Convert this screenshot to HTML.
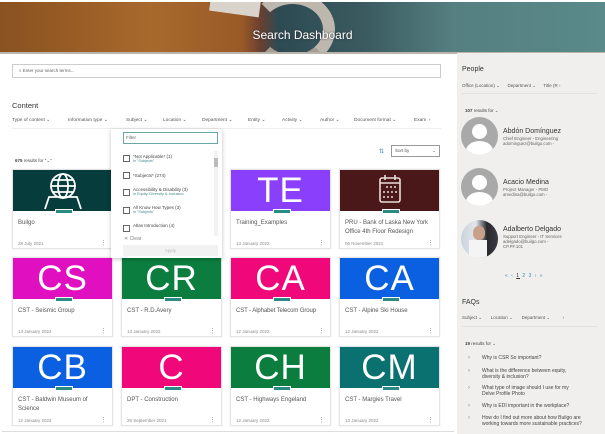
<!DOCTYPE html>
<html><head><meta charset="utf-8"><style>
*{box-sizing:border-box;margin:0;padding:0}
body{width:605px;height:434px;overflow:hidden;background:#fff;font-family:"Liberation Sans",sans-serif;position:relative;color:#323130}
.a{position:absolute}
.banner{left:0;top:2px;width:605px;height:51px;background:linear-gradient(90deg,#8a5220 0%,#a8692c 25%,#9a5a28 40%,#6a4030 43%,#2d4a52 46%,#3a5a60 60%,#557f80 75%,#5a8a8a 100%);overflow:hidden}
.t{font-size:4.8px;color:#555;white-space:nowrap}
.card{position:absolute;width:101px;height:80px;background:#fff;border:1px solid #e4e4e4;box-shadow:0 0 1px #ddd}
.img{height:41px;color:#fff;font-size:35px;text-align:center;line-height:42px;position:relative;letter-spacing:1px}
.lab{position:absolute;left:42px;bottom:-3px;width:18px;height:5px;background:#2a8a84;border:1px solid #fff}
.ti{font-size:6px;color:#555;padding:8px 5px 0;line-height:9px;height:30px}
.d{font-size:4.5px;color:#888;padding:0 5px;position:relative}
.d:after{content:"⋮";position:absolute;right:5px;top:-2px;font-size:7px;color:#999}
.side{left:457px;top:53px;width:148px;height:381px;background:#f0efee}
.av{position:absolute;left:461px;width:37px;height:38px;border-radius:50%;background:#a9a9a9;overflow:hidden}
.av:before{content:"";position:absolute;left:11px;top:7px;width:15px;height:15px;border-radius:50%;background:#fff}
.av:after{content:"";position:absolute;left:5px;top:24px;width:27px;height:20px;border-radius:50% 50% 0 0;background:#fff}
.nm{position:absolute;left:503px;font-size:7px;color:#333}
.nm small{display:block;font-size:4.3px;color:#666;line-height:5px;margin-top:1px}
.fq{position:absolute;left:468px;font-size:5px;color:#444;line-height:5.5px;width:130px}
.fq b{font-weight:normal;color:#888;display:inline-block;width:14px;font-size:6px}
.fq span{display:inline-block;vertical-align:top;width:100px}
.chk{position:absolute;left:123px;width:7px;height:7px;border:1px solid #666;background:#fff}
.it{position:absolute;left:133px;font-size:4.5px;color:#444}
.it small{display:block;font-size:3.8px;color:#3c8a88}
</style></head><body>
<div class="a banner">
<div class="a" style="left:210px;top:-4px;width:50px;height:16px;background:#d8d4cc;transform:rotate(8deg)"></div>
<div class="a" style="left:250px;top:-10px;width:85px;height:75px;border-radius:50%;border:12px solid #bdb7ae;border-left-color:transparent;border-bottom-color:#a59d92"></div>
<div class="a" style="left:0;top:0;width:605px;height:51px;color:#fff;font-size:12px;text-align:center;line-height:66px;text-shadow:0 0 2px #333">Search Dashboard</div>
</div>
<div class="a" style="left:0;top:52px;width:605px;height:2px;background:#b9b4ac"></div>
<div class="a side"></div>
<div class="a" style="left:12px;top:64px;width:429px;height:14px;border:1px solid #ccc;font-size:4.5px;color:#666;line-height:12px;padding-left:6px">⌕ Enter your search terms...</div>
<div class="a" style="left:12px;top:101px;font-size:7.5px;color:#333">Content</div>
<div class="a t" style="left:12px;top:118px">Type of content ⌄</div>
<div class="a t" style="left:68px;top:118px">Information type ⌄</div>
<div class="a t" style="left:126px;top:118px">Subject ⌄</div>
<div class="a t" style="left:163px;top:118px">Location ⌄</div>
<div class="a t" style="left:202px;top:118px">Department ⌄</div>
<div class="a t" style="left:248px;top:118px">Entity ⌄</div>
<div class="a t" style="left:282px;top:118px">Activity ⌄</div>
<div class="a t" style="left:320px;top:118px">Author ⌄</div>
<div class="a t" style="left:354px;top:118px">Document format ⌄</div>
<div class="a t" style="left:414px;top:118px">Exam &nbsp;›</div>
<div class="a" style="left:12px;top:128px;width:429px;height:1px;background:#eee"></div>
<div class="a" style="left:379px;top:148px;font-size:6px;color:#3a8ab0">⇅</div>
<div class="a" style="left:391px;top:145px;width:49px;height:12px;border:1px solid #999;font-size:4.5px;line-height:10px;padding-left:3px;color:#555">Sort by<span style="float:right;margin-right:3px">⌄</span></div>
<div class="a" style="left:15px;top:158px;font-size:4.5px;color:#444"><b>675</b> results for "⌄"</div>

<div class="card" style="left:12px;top:169px"><div class="img" style="background:#063c3c"><svg width="60" height="41" viewBox="0 0 60 41"><g fill="none" stroke="#fff" stroke-width="1.8"><circle cx="30" cy="16" r="12"/><ellipse cx="30" cy="16" rx="5" ry="12"/><path d="M18 16h24M20 10h20M20 22h20M12 39l4-12h28l4 12"/></g></svg><div class="lab"></div></div><div class="ti">Builgo</div><div class="d">28 July 2021</div></div>
<div class="card" style="left:230px;top:169px"><div class="img" style="background:#8a3ffc">TE<div class="lab"></div></div><div class="ti">Training_Examples</div><div class="d">13 January 2022</div></div>
<div class="card" style="left:339px;top:169px"><div class="img" style="background:#4a1818"><svg width="40" height="41" viewBox="0 0 40 41"><g fill="none" stroke="#e8dcd8" stroke-width="1.6"><rect x="10" y="8" width="20" height="24" rx="2"/><path d="M10 13h20M15 5v5M25 5v5"/></g><g fill="#e8dcd8"><circle cx="17" cy="17" r="1"/><circle cx="21" cy="17" r="1"/><circle cx="25" cy="17" r="1"/><circle cx="14" cy="22" r="1"/><circle cx="18" cy="22" r="1"/><circle cx="22" cy="22" r="1"/><circle cx="26" cy="22" r="1"/><circle cx="14" cy="27" r="1"/><circle cx="18" cy="27" r="1"/><circle cx="22" cy="27" r="1"/></g></svg><div class="lab"></div></div><div class="ti">PRU - Bank of Laska New York Office 4th Floor Redesign</div><div class="d">05 November 2021</div></div>

<div class="card" style="left:12px;top:257px"><div class="img" style="background:#e010c0">CS<div class="lab"></div></div><div class="ti">CST - Seismic Group</div><div class="d">13 January 2022</div></div>
<div class="card" style="left:121px;top:257px"><div class="img" style="background:#0b7d3e">CR<div class="lab"></div></div><div class="ti">CST - R.D.Avery</div><div class="d">13 January 2022</div></div>
<div class="card" style="left:230px;top:257px"><div class="img" style="background:#f0087a">CA<div class="lab"></div></div><div class="ti" style="white-space:nowrap;letter-spacing:-0.1px">CST - Alphabet Telecom Group</div><div class="d">12 January 2022</div></div>
<div class="card" style="left:339px;top:257px"><div class="img" style="background:#0a60e0">CA<div class="lab"></div></div><div class="ti">CST - Alpine Ski House</div><div class="d">12 January 2022</div></div>

<div class="card" style="left:12px;top:346px"><div class="img" style="background:#0a60e0">CB<div class="lab"></div></div><div class="ti">CST - Baldwin Museum of Science</div><div class="d">12 January 2022</div></div>
<div class="card" style="left:121px;top:346px"><div class="img" style="background:#f0087a">C<div class="lab"></div></div><div class="ti">DPT - Construction</div><div class="d">29 September 2021</div></div>
<div class="card" style="left:230px;top:346px"><div class="img" style="background:#0b7d3e">CH<div class="lab"></div></div><div class="ti">CST - Highways Engeland</div><div class="d">12 January 2022</div></div>
<div class="card" style="left:339px;top:346px"><div class="img" style="background:#0a7070">CM<div class="lab"></div></div><div class="ti">CST - Margies Travel</div><div class="d">13 January 2022</div></div>
<div class="a" style="left:2px;top:431px;width:452px;height:1px;background:#ddd"></div>

<div class="a" style="left:111px;top:129px;width:111px;height:129px;background:#fff;box-shadow:0 1px 4px rgba(0,0,0,.25)"></div>
<div class="a" style="left:123px;top:132px;width:95px;height:12px;border:1px solid #6aa8a8;font-size:4.5px;line-height:10px;padding-left:2px;color:#666">Filter</div>
<div class="a" style="left:214px;top:151px;width:4px;height:85px;background:#f2f2f2"></div>
<div class="a" style="left:214px;top:158px;width:4px;height:9px;background:#bbb"></div>
<div class="chk" style="top:155px"></div><div class="it" style="top:154px">*Not Applicable* (1)<small>in "Subjects"</small></div>
<div class="chk" style="top:172px"></div><div class="it" style="top:173px">*Subjects* (274)</div>
<div class="chk" style="top:189px"></div><div class="it" style="top:187px">Accessibility &amp; Disability (3)<small>in Equity, Diversity &amp; Inclusion</small></div>
<div class="chk" style="top:207px"></div><div class="it" style="top:205px">All Know How Types (3)<small>in "Subjects"</small></div>
<div class="chk" style="top:225px"></div><div class="it" style="top:223px">Atlas Introduction (4)</div>
<div class="a" style="left:124px;top:236px;font-size:5px;color:#888">✕ Clear</div>
<div class="a" style="left:123px;top:245px;width:95px;height:11px;background:#f2f2f2;font-size:4.5px;color:#bbb;text-align:center;line-height:11px">Apply</div>

<div class="a" style="left:462px;top:66px;font-size:7px;color:#333">People</div>
<div class="a t" style="left:462px;top:83px;font-size:4.5px">Office (Location) ⌄ &nbsp;&nbsp;&nbsp;&nbsp; Department ⌄ &nbsp;&nbsp;&nbsp;&nbsp; Title (R ›</div>
<div class="a" style="left:462px;top:93px;width:135px;height:1px;background:#e2e1e0"></div>
<div class="a" style="left:465px;top:108px;font-size:4.5px;color:#444"><b>107</b> results for ⌄</div>
<div class="av" style="top:117px"></div>
<div class="nm" style="top:128px">Abdón Domínguez<small>Chief Engineer - Engineering<br>adominguez@builgo.com -</small></div>
<div class="av" style="top:168px"></div>
<div class="nm" style="top:179px">Acacio Medina<small>Project Manager - PMO<br>amedina@builgo.com -</small></div>
<div class="a" style="left:461px;top:220px;width:37px;height:38px;border-radius:50%;background:linear-gradient(90deg,#c8d4dc 0%,#e2e6ea 40%,#2a2a2e 70%,#3a3a40 100%);overflow:hidden"><div class="a" style="left:12px;top:6px;width:12px;height:14px;border-radius:45%;background:#c9a08a"></div><div class="a" style="left:8px;top:20px;width:18px;height:20px;background:#f4f4f4"></div></div>
<div class="nm" style="top:226px">Adalberto Delgado<small>Support Engineer - IT Services<br>adelgado@builgo.com -<br>CP.PF.101</small></div>
<div class="a" style="left:505px;top:273px;font-size:5px;color:#3a8ab0;letter-spacing:1px">« ‹ <u style="color:#333">1</u> 2 3 › »</div>
<div class="a" style="left:462px;top:299px;font-size:7px;color:#333">FAQs</div>
<div class="a t" style="left:462px;top:315px;font-size:4.5px">Subject ⌄ &nbsp;&nbsp;&nbsp;&nbsp;&nbsp; Location ⌄ &nbsp;&nbsp;&nbsp;&nbsp;&nbsp; Department ⌄ &nbsp;&nbsp;&nbsp;&nbsp;&nbsp;&nbsp;&nbsp;&nbsp; ›</div>
<div class="a" style="left:462px;top:326px;width:135px;height:1px;background:#e2e1e0"></div>
<div class="a" style="left:465px;top:341px;font-size:4.5px;color:#444"><b>19</b> results for ⌄</div>
<div class="fq" style="top:356px"><b>›</b><span>Why is CSR So important?</span></div>
<div class="fq" style="top:369px"><b>›</b><span>What is the difference between equity, diversity &amp; inclusion?</span></div>
<div class="fq" style="top:386px"><b>›</b><span>What type of image should I use for my Delve Profile Photo</span></div>
<div class="fq" style="top:404px"><b>›</b><span>Why is EDI important in the workplace?</span></div>
<div class="fq" style="top:416px"><b>›</b><span>How do I find out more about how Builgo are working towards more sustainable practices?</span></div>
</body></html>
